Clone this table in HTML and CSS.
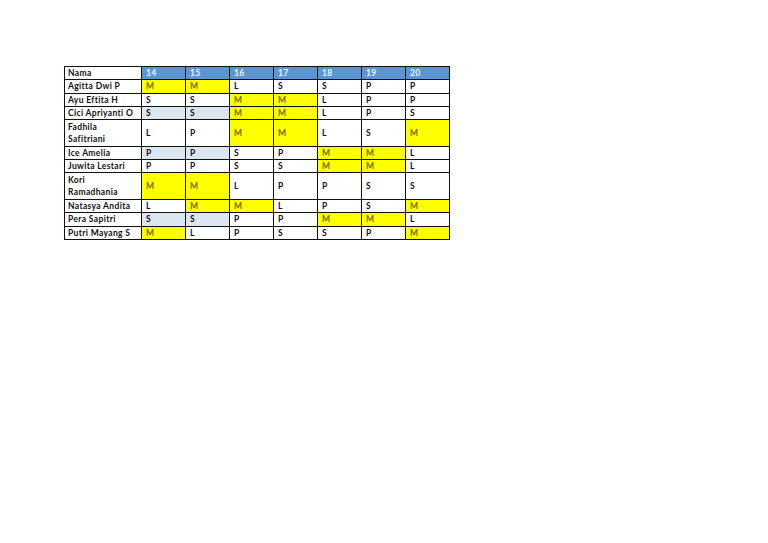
FILE: index.html
```html
<!DOCTYPE html>
<html>
<head>
<meta charset="utf-8">
<link rel="stylesheet" href="styles.css">
</head>
<body>
<div class="page">
<table class="sheet">
<colgroup><col class="c-name"><col class="c-day"><col class="c-day"><col class="c-day"><col class="c-day"><col class="c-day"><col class="c-day"><col class="c-day"></colgroup>
<tr class="r1"><td class="name">Nama</td><td class="hd">14</td><td class="hd">15</td><td class="hd">16</td><td class="hd">17</td><td class="hd">18</td><td class="hd">19</td><td class="hd">20</td></tr>
<tr class="r1"><td class="name">Agitta Dwi P</td><td class="m">M</td><td class="m">M</td><td>L</td><td>S</td><td>S</td><td>P</td><td>P</td></tr>
<tr class="r1"><td class="name">Ayu Eftita H</td><td>S</td><td>S</td><td class="m">M</td><td class="m">M</td><td>L</td><td>P</td><td>P</td></tr>
<tr class="r1"><td class="name">Cici Apriyanti O</td><td class="b">S</td><td class="b">S</td><td class="m">M</td><td class="m">M</td><td>L</td><td>P</td><td>S</td></tr>
<tr class="r2"><td class="name">Fadhila<br>Safitriani</td><td>L</td><td>P</td><td class="m">M</td><td class="m">M</td><td>L</td><td>S</td><td class="m">M</td></tr>
<tr class="r1"><td class="name">Ice Amelia</td><td class="b">P</td><td class="b">P</td><td>S</td><td>P</td><td class="m">M</td><td class="m">M</td><td>L</td></tr>
<tr class="r1"><td class="name">Juwita Lestari</td><td>P</td><td>P</td><td>S</td><td>S</td><td class="m">M</td><td class="m">M</td><td>L</td></tr>
<tr class="r2"><td class="name">Kori<br>Ramadhania</td><td class="m">M</td><td class="m">M</td><td>L</td><td>P</td><td>P</td><td>S</td><td>S</td></tr>
<tr class="r1"><td class="name">Natasya Andita</td><td>L</td><td class="m">M</td><td class="m">M</td><td>L</td><td>P</td><td>S</td><td class="m">M</td></tr>
<tr class="r1"><td class="name">Pera Sapitri</td><td class="b">S</td><td class="b">S</td><td>P</td><td>P</td><td class="m">M</td><td class="m">M</td><td>L</td></tr>
<tr class="r1"><td class="name">Putri Mayang S</td><td class="m">M</td><td>L</td><td>P</td><td>S</td><td>S</td><td>P</td><td class="m">M</td></tr>
</table>
</div>
</body>
</html>
```
FILE: styles.css
```css
html, body {
  margin: 0;
  padding: 0;
  background: #ffffff;
}
.page {
  width: 768px;
  height: 543px;
  padding: 66px 0 0 64px;
  box-sizing: border-box;
}
.sheet {
  border-collapse: collapse;
  table-layout: fixed;
  width: 385px;
  font-family: Lato, "Liberation Sans", sans-serif;
  font-weight: bold;
  font-size: 8.5px;
  letter-spacing: 0.35px;
  color: #111111;
  border: 1.5px solid #111111;
}
.c-name { width: 77px; }
.c-day { width: 44px; }
.sheet td {
  border: 1px solid #111111;
  padding: 0 0 0 4px;
  text-align: left;
  vertical-align: middle;
  line-height: 12px;
  overflow: hidden;
  white-space: nowrap;
}
.r1 td { height: 12.3px; }
.r2 td { height: 25.6px; }
.sheet td.name {
  padding-left: 3px;
  background: #ffffff;
}
.sheet td.hd {
  background: #5b96d2;
  color: #eef4fb;
}
.sheet td.m {
  background: #ffff00;
  color: #7a6700;
}
.sheet td.b {
  background: #dce6f1;
}
```
